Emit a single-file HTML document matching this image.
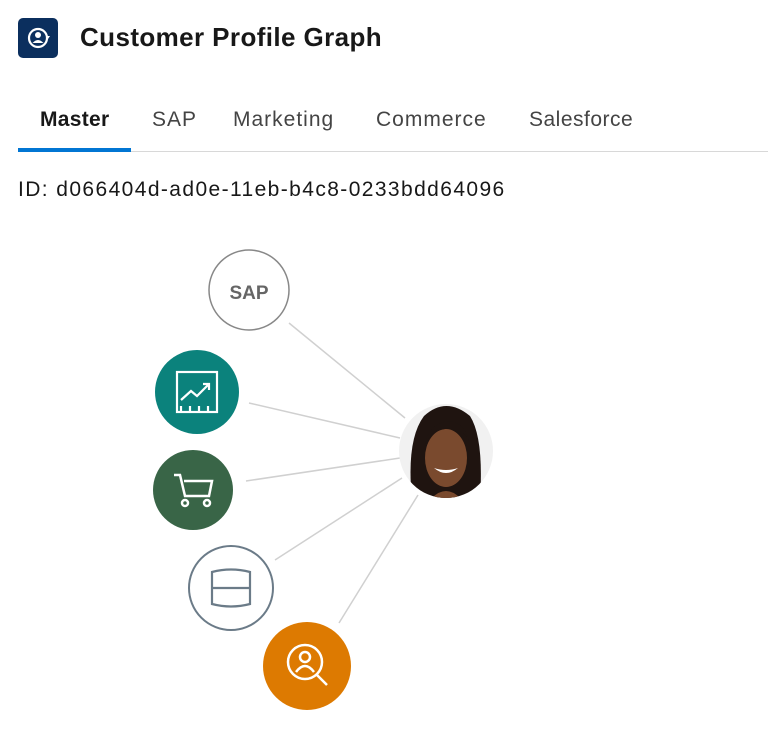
<!DOCTYPE html>
<html><head><style>
body{margin:0;width:768px;height:753px;background:#fff;font-family:"Liberation Sans",sans-serif;position:relative;overflow:hidden;color:#181818}
.ic{position:absolute;left:18px;top:18px;width:40px;height:40px;background:#0b2f5e;border-radius:5px}
.t{position:absolute;left:80px;top:22px;font-size:26px;font-weight:bold;letter-spacing:0.4px}
.tab{position:absolute;top:108px;font-size:21px;color:#444;letter-spacing:1px}
.ul{position:absolute;left:18px;top:148px;width:113px;height:4px;background:#0176d3}
.ln{position:absolute;left:131px;top:151px;width:637px;height:1px;background:#d8d8d8}
.id{position:absolute;left:18px;top:178px;font-size:21px;letter-spacing:1.4px}
</style></head><body>
<div class="ic"><svg width="40" height="40" viewBox="0 0 40 40"><circle cx="20" cy="20" r="9" fill="none" stroke="#fff" stroke-width="2.2"/><circle cx="20" cy="17" r="3" fill="#fff"/><path d="M14.5 25 q5.5-6 11 0" fill="#fff"/><path d="M28 18 l2 3 l2-3" fill="#fff"/></svg></div>
<div class="t">Customer Profile Graph</div>
<div class="tab" style="left:40px;color:#181818;font-weight:bold;letter-spacing:0.3px">Master</div>
<div class="tab" style="left:152px">SAP</div>
<div class="tab" style="left:233px">Marketing</div>
<div class="tab" style="left:376px">Commerce</div>
<div class="tab" style="left:529px;letter-spacing:0.5px">Salesforce</div>
<div class="ul"></div><div class="ln"></div>
<div class="id">ID: d066404d-ad0e-11eb-b4c8-0233bdd64096</div>
<svg style="position:absolute;left:0;top:0" width="768" height="753">
<g stroke="#d0d0d0" stroke-width="1.5">
<line x1="289" y1="323" x2="405" y2="418"/>
<line x1="249" y1="403" x2="400" y2="438"/>
<line x1="246" y1="481" x2="400" y2="458"/>
<line x1="275" y1="560" x2="402" y2="478"/>
<line x1="339" y1="623" x2="418" y2="495"/>
</g>
<circle cx="249" cy="290" r="40" fill="#fff" stroke="#888" stroke-width="1.5"/>
<text x="249" y="299" text-anchor="middle" font-size="19" font-weight="bold" fill="#666" font-family="Liberation Sans">SAP</text>
<circle cx="197" cy="392" r="42" fill="#0b827c"/>
<g stroke="#fff" stroke-width="2.2" fill="none"><rect x="177" y="372" width="40" height="40"/><path d="M181 400 l10-9 l6 5 l12-12 M203 384 h6 v6 M181 412 v-6 M190 412 v-6 M199 412 v-6 M208 412 v-6"/></g>
<circle cx="193" cy="490" r="40" fill="#396547"/>
<g stroke="#fff" stroke-width="2.5" fill="none"><path d="M174 475 h6 l5 21 h24 l3-15 h-28"/><circle cx="185" cy="503" r="3"/><circle cx="207" cy="503" r="3"/></g>
<circle cx="231" cy="588" r="42" fill="#fff" stroke="#6b7b88" stroke-width="2"/>
<g stroke="#6b7b88" stroke-width="2.2" fill="none"><path d="M212 572 q19-5 38 0 v32 q-19 5-38 0 z M212 588 h38"/></g>
<circle cx="307" cy="666" r="44" fill="#dd7a01"/>
<g stroke="#fff" stroke-width="2.5" fill="none"><circle cx="305" cy="662" r="17"/><circle cx="305" cy="657" r="5"/><path d="M296 672 q9-12 18 0 M317 675 l10 10"/></g>
<clipPath id="c"><circle cx="446" cy="451" r="47"/></clipPath>
<g clip-path="url(#c)"><rect x="399" y="404" width="94" height="94" fill="#f1f1f1"/>
<path d="M412 500 q-6-60 12-84 q22-20 46 0 q14 22 10 84 z" fill="#1f1410"/>
<ellipse cx="446" cy="458" rx="21" ry="29" fill="#7a4a2e"/>
<path d="M425 445 q4-22 24-24 q16 2 20 20 q-6-14-24-12 q-14 2-20 16z" fill="#1f1410"/>
<path d="M434 468 q12 10 24 0 q-12 4-24 0z" fill="#fff"/>
<path d="M430 500 q16-18 32 0z" fill="#7a4a2e"/></g>
</svg>
</body></html>
